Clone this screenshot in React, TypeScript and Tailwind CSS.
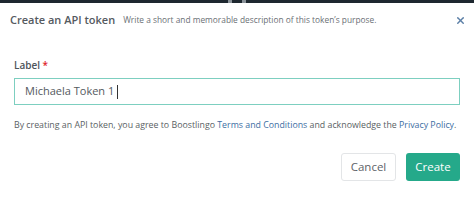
import { X } from 'lucide-react';

export default function App() {
    return (
        <div className="w-[474px] h-[213px] bg-white overflow-hidden font-['Open_Sans',sans-serif]">
            {/* Backdrop strip behind the modal */}
            <div className="h-[3px] bg-[#1e2830] flex">
                <div className="w-[228px]" />
                <div className="w-[4px] bg-[#8a9299]" />
                <div className="w-[10px]" />
                <div className="w-[4px] bg-[#8a9299]" />
            </div>

            {/* Header */}
            <div className="flex items-center h-[34px] pl-[10px] pr-[8px]">
                <span className="text-[11px] font-semibold text-[#555a5f]">Create an API token</span>
                <span className="ml-[8px] text-[8.35px] text-[#6b7075]">
                    Write a short and memorable description of this token’s purpose.
                </span>
                <button className="ml-auto w-[12px] h-[12px] flex items-center justify-center text-[#5b7fa6]">
                    <X size={11} strokeWidth={3} />
                </button>
            </div>

            {/* Body */}
            <div className="px-[14px] pt-[21px]">
                <label className="block text-[10px] font-semibold text-[#4e5459] leading-[14px]">
                    Label <span className="text-[#e0252b]">*</span>
                </label>
                <div className="mt-[6px] h-[27px] border-[1.5px] border-[#7dcfc0] flex items-center pl-[10px]">
                    <span className="text-[11px] text-[#54595e]">Michaela Token 1</span>
                    <span className="ml-[3px] w-[1px] h-[14px] bg-[#333]" />
                </div>
                <p className="mt-[14px] text-[8.8px] text-[#5a5f64] leading-[12px]">
                    By creating an API token, you agree to Boostlingo{' '}
                    <span className="text-[#3d6ea3]">Terms and Conditions</span> and acknowledge the{' '}
                    <span className="text-[#3d6ea3]">Privacy Policy</span>.
                </p>

                {/* Actions */}
                <div className="mt-[22px] flex justify-end gap-[10px]">
                    <button className="w-[55px] h-[28px] border border-[#e3e5e7] rounded-[3px] text-[11.5px] text-[#5e6368] bg-white">
                        Cancel
                    </button>
                    <button className="w-[54px] h-[28px] rounded-[3px] text-[11.5px] text-white bg-[#25a98a]">
                        Create
                    </button>
                </div>
            </div>
        </div>
    );
}
